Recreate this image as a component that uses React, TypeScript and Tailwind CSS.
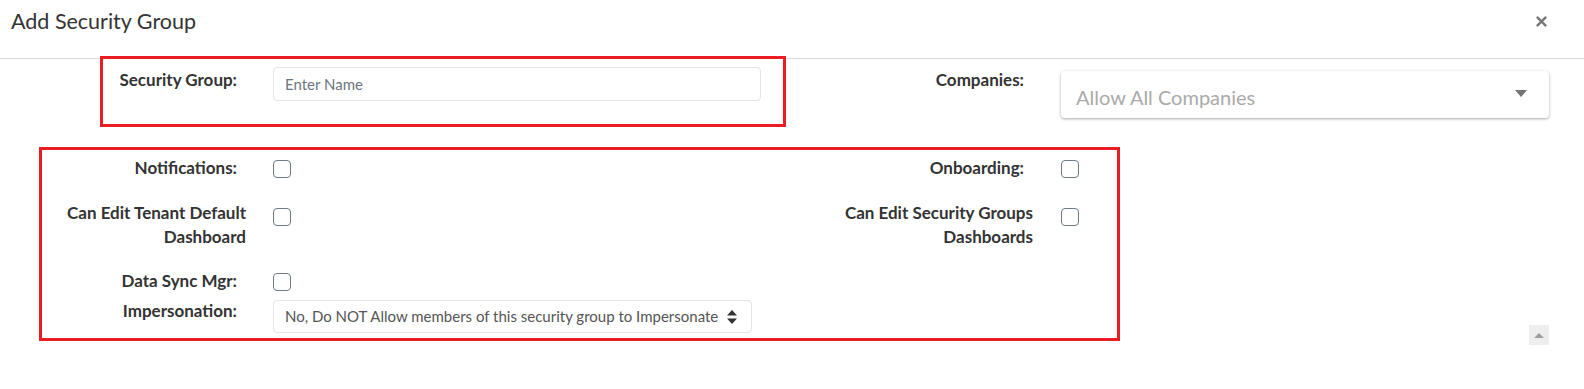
import React from 'react'

function Checkbox({ className = '' }: { className?: string }) {
  return (
    <span
      className={`block w-[18px] h-[18px] rounded-[4px] border border-[#6c7a89] bg-white ${className}`}
    />
  )
}

function Label({ children, className = '' }: { children: React.ReactNode; className?: string }) {
  return (
    <div className={`text-right font-bold text-[17px] leading-6 text-[#333] ${className}`}>
      {children}
    </div>
  )
}

export default function App() {
  return (
    <div className="relative w-[1584px] h-[389px] bg-white font-['Lato',sans-serif] overflow-hidden">
      {/* header */}
      <div className="flex justify-between h-[59px] border-b border-[#d9d9d9]">
        <h4 className="pl-[11px] pt-[7px] text-[21.5px] leading-7 text-[#333]">Add Security Group</h4>
        <button className="mr-[35px] mt-[14px] h-[14px] w-[14px] text-[#777]">
          <svg viewBox="0 0 14 14" className="w-[13px] h-[13px]">
            <path d="M2 2 L12 12 M12 2 L2 12" stroke="currentColor" strokeWidth="2.6" />
          </svg>
        </button>
      </div>

      {/* row: security group / companies */}
      <div className="flex items-start h-[59px]">
        <Label className="w-[237px] mt-[9px]">Security Group:</Label>
        <div className="ml-[36px] mt-[8px] w-[488px] h-[34px] rounded-[4px] border border-[#e1e4e8] flex items-center px-[11px] text-[15px] text-[#6c757d]">
          Enter Name
        </div>
        <Label className="w-[263px] mt-[9px]">Companies:</Label>
        <div className="ml-[37px] mt-[12px] w-[488px] h-[47px] rounded-[4px] bg-white shadow-[0_1px_3px_rgba(0,0,0,0.35)] flex items-center justify-between pl-[15px] pr-[22px]">
          <span className="text-[20px] text-[#aaa] mt-[4px]">Allow All Companies</span>
          <svg viewBox="0 0 12 7" className="w-[12px] h-[7px] mt-[-3px]">
            <path d="M0 0 L12 0 L6 7 Z" fill="#757575" />
          </svg>
        </div>
      </div>

      {/* notifications / onboarding */}
      <div className="flex items-start mt-[38px]">
        <Label className="w-[237px]">Notifications:</Label>
        <Checkbox className="ml-[36px] mt-[4px]" />
        <Label className="w-[733px]">Onboarding:</Label>
        <Checkbox className="ml-[37px] mt-[4px]" />
      </div>

      {/* dashboards */}
      <div className="flex items-start mt-[21px]">
        <Label className="w-[246px]">
          Can Edit Tenant Default
          <br />
          Dashboard
        </Label>
        <Checkbox className="ml-[27px] mt-[7px]" />
        <Label className="w-[742px]">
          Can Edit Security Groups
          <br />
          Dashboards
        </Label>
        <Checkbox className="ml-[28px] mt-[7px]" />
      </div>

      {/* data sync */}
      <div className="flex items-start mt-[20px]">
        <Label className="w-[237px]">Data Sync Mgr:</Label>
        <Checkbox className="ml-[36px] mt-[4px]" />
      </div>

      {/* impersonation */}
      <div className="flex items-start mt-[6px]">
        <Label className="w-[237px]">Impersonation:</Label>
        <div className="ml-[36px] mt-[1px] w-[479px] h-[33px] rounded-[4px] border border-[#e1e4e8] flex items-center justify-between pl-[11px] pr-[14px] text-[15px] text-[#555]">
          <span>No, Do NOT Allow members of this security group to Impersonate</span>
          <svg viewBox="0 0 10 14" className="w-[10px] h-[14px]">
            <path d="M5 0 L10 5.5 L0 5.5 Z M5 14 L10 8.5 L0 8.5 Z" fill="#333" />
          </svg>
        </div>
      </div>

      {/* annotation boxes */}
      <div className="absolute left-[100px] top-[56px] w-[686px] h-[71px] border-[3px] border-[#ec1c24] pointer-events-none" />
      <div className="absolute left-[39px] top-[147px] w-[1081px] h-[194px] border-[3px] border-[#ec1c24] pointer-events-none" />

      {/* scroll to top */}
      <button className="absolute left-[1529px] top-[325px] w-[20px] h-[20px] bg-[#eeeeee] flex items-center justify-center">
        <svg viewBox="0 0 10 5" className="w-[10px] h-[5px]">
          <path d="M5 0 L10 5 L0 5 Z" fill="#9e9e9e" />
        </svg>
      </button>
    </div>
  )
}
